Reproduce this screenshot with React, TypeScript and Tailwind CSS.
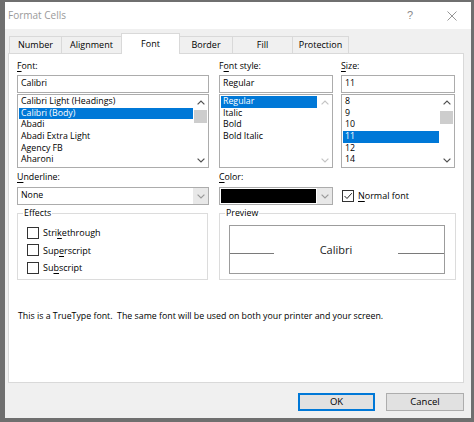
import React from "react";

const K = ({ children }: { children: React.ReactNode }) => (
  <span className="underline underline-offset-[1.5px] decoration-[0.5px]">{children}</span>
);

const Chevron = ({ up, color }: { up?: boolean; color: string }) => (
  <svg width="8" height="5" viewBox="0 0 8 5">
    <polyline
      points={up ? "0.6,4.4 4,1 7.4,4.4" : "0.6,0.6 4,4 7.4,0.6"}
      fill="none"
      stroke={color}
      strokeWidth="1.2"
    />
  </svg>
);

type ListProps = {
  items: string[];
  selected: number;
  width: string;
  disabled?: boolean;
  thumbTop?: string;
};

function ListBox({ items, selected, width, disabled, thumbTop }: ListProps) {
  const arrow = disabled ? "#c4c4c4" : "#505050";
  return (
    <div className={`${width} mt-[1px] h-[74px] border border-[#acacac] bg-white flex`}>
      <div className="flex-1 flex flex-col pt-[1px] pl-[1px]">
        {items.map((it, i) => (
          <div
            key={it}
            className={`h-[11.7px] leading-[11.7px] px-[2px] whitespace-nowrap ${
              i === selected ? "bg-[#0078d7] text-white" : "text-black"
            }`}
          >
            {it}
          </div>
        ))}
      </div>
      <div className="w-[15px] flex flex-col items-center">
        <div className="h-[14px] flex items-center justify-center">
          <Chevron up color={arrow} />
        </div>
        {!disabled && <div className={`${thumbTop} w-[13px] h-[13px] bg-[#cdcdcd]`} />}
        <div className="flex-1" />
        <div className="h-[14px] flex items-center justify-center">
          <Chevron color={arrow} />
        </div>
      </div>
    </div>
  );
}

const Check = () => (
  <div className="w-[12px] h-[12px] border border-[#333333] bg-white shrink-0" />
);

export default function App() {
  const tabs = [
    { l: "Number", w: "w-[53px]" },
    { l: "Alignment", w: "w-[61px]" },
    { l: "Font", w: "w-[59px]", sel: true },
    { l: "Border", w: "w-[54px]" },
    { l: "Fill", w: "w-[61px]" },
    { l: "Protection", w: "w-[57px]" },
  ];
  return (
    <div className="w-[474px] h-[422px] bg-[#6f6f6f] flex flex-col pt-[2px] pl-[5px] pr-[3px] pb-[4px] font-['Open_Sans','Noto_Sans',sans-serif] text-[8.8px] text-black">
      <div className="flex-1 flex flex-col bg-[#f0f0f0]">
        {/* Title bar */}
        <div className="h-[27px] bg-white flex items-center pl-[3px] pr-[14px]">
          <span className="text-[10px] text-[#9a9a9a]">Format Cells</span>
          <span className="ml-auto text-[11px] text-[#8a8a8a] font-['Liberation_Sans',sans-serif]">?</span>
          <svg className="ml-[34px]" width="10" height="10" viewBox="0 0 10 10">
            <path d="M0.5 0.5 L9.5 9.5 M9.5 0.5 L0.5 9.5" stroke="#8a8a8a" strokeWidth="0.9" />
          </svg>
        </div>

        {/* Tabs */}
        <div className="h-[24px] flex items-end pl-[5px]">
          {tabs.map((t) => (
            <div
              key={t.l}
              className={`${t.w} -ml-px flex items-center justify-center border border-b-0 border-[#d9d9d9] ${
                t.sel
                  ? "h-[21px] bg-white relative z-10 -mb-px pb-[1px]"
                  : "h-[17px] bg-[#f0f0f0]"
              } text-[9px]`}
            >
              {t.l}
            </div>
          ))}
        </div>

        {/* Panel */}
        <div className="ml-[3px] w-[456px] h-[330px] border border-[#d9d9d9] bg-white flex flex-col pl-[8px] pt-[6px]">
          {/* Row 1 */}
          <div className="flex">
            <div className="w-[192px] flex flex-col">
              <div className="h-[12px] leading-[12px]">
                <K>F</K>ont:
              </div>
              <div className="mt-[3px] h-[18px] border border-[#acacac] flex items-center px-[3px]">Calibri</div>
              <ListBox
                width="w-[192px]"
                selected={1}
                thumbTop="mt-[1px]"
                items={[
                  "Calibri Light (Headings)",
                  "Calibri (Body)",
                  "Abadi",
                  "Abadi Extra Light",
                  "Agency FB",
                  "Aharoni",
                ]}
              />
            </div>
            <div className="ml-[10px] w-[114px] flex flex-col">
              <div className="h-[12px] leading-[12px]">
                F<K>o</K>nt style:
              </div>
              <div className="mt-[3px] h-[18px] border border-[#acacac] flex items-center px-[3px]">Regular</div>
              <ListBox
                width="w-[114px]"
                selected={0}
                disabled
                items={["Regular", "Italic", "Bold", "Bold Italic"]}
              />
            </div>
            <div className="ml-[8px] w-[114px] flex flex-col">
              <div className="h-[12px] leading-[12px]">
                <K>S</K>ize:
              </div>
              <div className="mt-[3px] h-[18px] border border-[#acacac] flex items-center px-[3px]">11</div>
              <ListBox
                width="w-[114px]"
                selected={3}
                thumbTop="mt-[2px]"
                items={["8", "9", "10", "11", "12", "14"]}
              />
            </div>
          </div>

          {/* Row 2 */}
          <div className="flex mt-[3px]">
            <div className="w-[192px] flex flex-col">
              <div className="h-[12px] leading-[12px]">
                <K>U</K>nderline:
              </div>
              <div className="mt-[4px] h-[18px] border border-[#acacac] flex">
                <div className="flex-1 flex items-center px-[3px]">None</div>
                <div className="w-[15px] bg-[#e8e8e8] flex items-center justify-center">
                  <Chevron color="#9a9a9a" />
                </div>
              </div>
            </div>
            <div className="ml-[10px] w-[114px] flex flex-col">
              <div className="h-[12px] leading-[12px]">
                <K>C</K>olor:
              </div>
              <div className="mt-[4px] h-[18px] border border-[#acacac] flex">
                <div className="flex-1 p-[1px] pr-[1px]">
                  <div className="w-full h-full bg-black" />
                </div>
                <div className="w-[15px] bg-[#e8e8e8] flex items-center justify-center">
                  <Chevron color="#9a9a9a" />
                </div>
              </div>
            </div>
            <div className="ml-[9px] flex items-end">
              <div className="h-[18px] flex items-center gap-[4px]">
                <div className="w-[12px] h-[12px] border border-[#333333] bg-white flex items-center justify-center">
                  <svg width="10" height="10" viewBox="0 0 10 10">
                    <polyline points="1.5,5 4,7.5 8.8,2.2" fill="none" stroke="#222" strokeWidth="1" />
                  </svg>
                </div>
                <span className="text-[9px]">
                  <K>N</K>ormal font
                </span>
              </div>
            </div>
          </div>

          {/* Row 3 groups */}
          <div className="flex mt-[2px]">
            <fieldset className="w-[191px] h-[73px] border border-[#dcdcdc] flex flex-col">
              <legend className="ml-[5px] px-[1px] h-[12px] leading-[12px]">Effects</legend>
              <div className="mt-[5px] pl-[9px] flex flex-col">
                {[
                  ["Stri", "k", "ethrough"],
                  ["Sup", "e", "rscript"],
                  ["Su", "b", "script"],
                ].map(([a, b, c]) => (
                  <div key={a + c} className="h-[17.5px] flex items-center gap-[4px]">
                    <Check />
                    <span className="text-[9px]">
                      {a}
                      <K>{b}</K>
                      {c}
                    </span>
                  </div>
                ))}
              </div>
            </fieldset>
            <fieldset className="ml-[11px] w-[237px] h-[73px] border border-[#dcdcdc] flex flex-col">
              <legend className="ml-[5px] px-[1px] h-[12px] leading-[12px]">Preview</legend>
              <div className="mt-[6px] ml-[9px] w-[216px] h-[49px] border border-[#9c9c9c] flex items-baseline justify-between pt-[17px]">
                <div className="w-[44px] h-[1px] bg-[#7a7a7a]" />
                <span className="text-[11px] leading-[14px] text-[#222]">Calibri</span>
                <div className="w-[46px] h-[1px] bg-[#7a7a7a]" />
              </div>
            </fieldset>
          </div>

          <div className="mt-[30px] pl-[1px] h-[12px] leading-[12px] whitespace-pre">
            This is a TrueType font.  The same font will be used on both your printer and your screen.
          </div>
        </div>

        {/* Buttons */}
        <div className="flex justify-end gap-[11px] pt-[10px] pr-[7px]">
          <div className="w-[77px] h-[18px] border-2 border-[#0078d7] bg-[#e1e1e1] flex items-center justify-center text-[9.5px]">
            OK
          </div>
          <div className="w-[78px] h-[18px] border border-[#adadad] bg-[#e1e1e1] flex items-center justify-center text-[9.5px]">
            Cancel
          </div>
        </div>
      </div>
    </div>
  );
}
